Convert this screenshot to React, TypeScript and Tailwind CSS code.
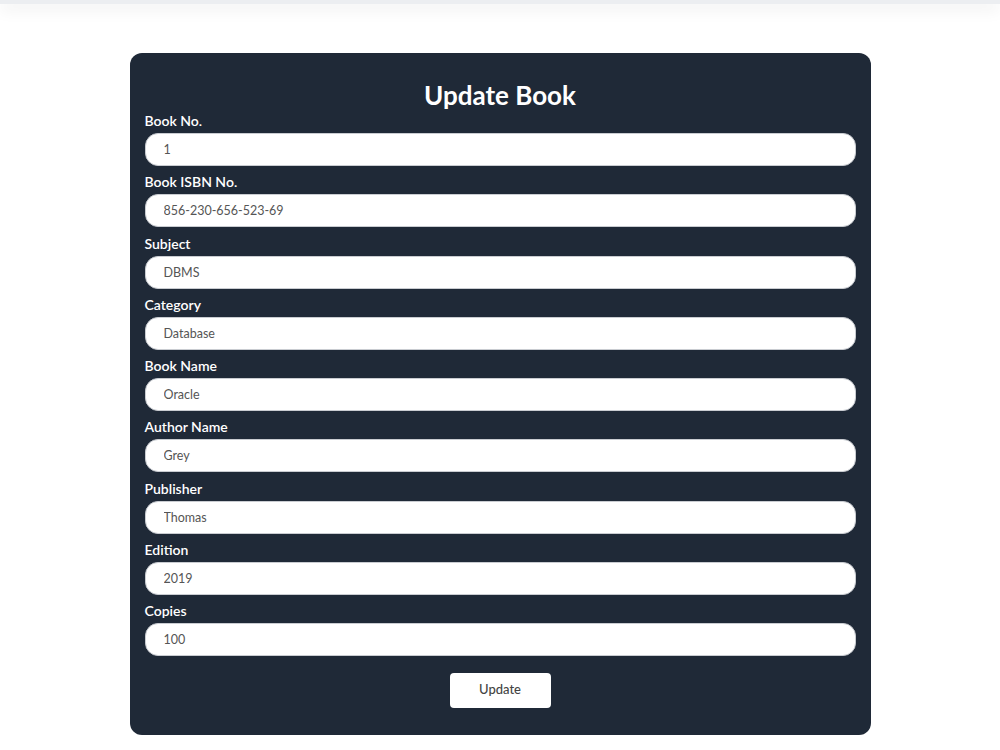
import React from "react";

const fields: [string, string][] = [
  ["Book No.", "1"],
  ["Book ISBN No.", "856-230-656-523-69"],
  ["Subject", "DBMS"],
  ["Category", "Database"],
  ["Book Name", "Oracle"],
  ["Author Name", "Grey"],
  ["Publisher", "Thomas"],
  ["Edition", "2019"],
  ["Copies", "100"],
];

export default function App() {
  return (
    <div className="min-h-[750px] bg-white" style={{ fontFamily: "Lato, 'Noto Sans', sans-serif" }}>
      <div className="h-[4px] bg-[#eceef1] shadow-[0_4px_16px_rgba(0,0,0,0.14)]" />
      <div className="mx-auto mt-[49px] w-[741px] rounded-[12px] bg-[#1f2937] px-[15px] pt-[28px] pb-[27px]">
        <h1 className="text-center text-[26px] font-bold leading-[28px] text-white">Update Book</h1>
        <form className="flex flex-col" onSubmit={(e) => e.preventDefault()}>
          {fields.map(([label, value]) => (
            <div key={label} className="mb-[4.3px] flex flex-col">
              <label className="mt-[2px] text-[14px] font-semibold leading-[20px] text-white">{label}</label>
              <input
                className="mt-[2px] h-[33px] w-full rounded-[13px] border border-[#c9ccd1] bg-white px-[18px] text-[12.5px] text-[#555] outline-none"
                defaultValue={value}
              />
            </div>
          ))}
          <div className="mt-[12px] flex justify-center">
            <button className="h-[35px] w-[101px] rounded-[4px] bg-white text-[13px] font-medium text-[#444]">
              Update
            </button>
          </div>
        </form>
      </div>
    </div>
  );
}
